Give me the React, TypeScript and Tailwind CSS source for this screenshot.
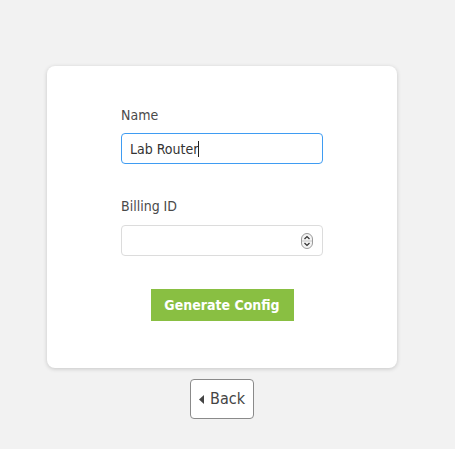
export default function App() {
  const font = { fontFamily: '"DejaVu Sans Condensed", "DejaVu Sans", sans-serif' };
  return (
    <div className="min-h-screen bg-[#f2f2f2] pt-[66px]" style={font}>
      <div className="ml-[47px] w-[350px]">
        <div className="h-[302px] rounded-lg bg-white pt-[39px] shadow-[0_1px_4px_rgba(0,0,0,0.18)]">
          <form className="mx-auto flex w-[202px] flex-col" onSubmit={(e) => e.preventDefault()}>
            <label className="mb-[8px] text-[14px] leading-[20px] text-[#4a4a4a]">Name</label>
            <div className="relative h-[31px]">
              <input
                defaultValue="Lab Router"
                className="h-full w-full rounded-[4px] border border-[#3f9cf2] px-[8px] text-[14px] text-[#333] caret-transparent outline-none"
                style={font}
              />
              {/* caret, drawn so it shows in a still picture */}
              <span className="absolute left-[77px] top-[8px] h-[16px] w-px bg-[#222]" />
            </div>
            <label className="mb-[9px] mt-[32px] text-[14px] leading-[20px] text-[#4a4a4a]">Billing ID</label>
            <div className="relative h-[31px]">
              <input
                className="h-full w-full rounded-[4px] border border-[#dcdcdc] px-[8px] text-[14px] text-[#333] outline-none"
                style={font}
              />
              <svg
                className="absolute right-[10px] top-[8px]"
                width="12"
                height="16"
                viewBox="0 0 12 16"
              >
                <rect x="0.5" y="0.5" width="11" height="15" rx="5.5" fill="#f4f4f4" stroke="#9a9a9a" />
                <line x1="1" y1="8" x2="11" y2="8" stroke="#c8c8c8" />
                <path d="M3.5 6 L6 3.6 L8.5 6" fill="none" stroke="#333" strokeWidth="1.3" />
                <path d="M3.5 10 L6 12.4 L8.5 10" fill="none" stroke="#333" strokeWidth="1.3" />
              </svg>
            </div>
            <div className="mt-[33px] flex justify-center">
              <button
                type="submit"
                className="h-[32px] w-[143px] bg-[#89bf42] text-[14px] font-bold text-white"
                style={font}
              >
                Generate Config
              </button>
            </div>
          </form>
        </div>
        <div className="mt-[11px] flex justify-center">
          <button
            className="flex h-[40px] w-[64px] items-center justify-center gap-[6px] rounded-[4px] border border-[#8a8a8a] bg-white text-[16px] text-[#444]"
            style={font}
          >
            <svg width="5" height="9" viewBox="0 0 5 9">
              <path d="M5 0 L0 4.5 L5 9 Z" fill="#444" />
            </svg>
            Back
          </button>
        </div>
      </div>
    </div>
  );
}
